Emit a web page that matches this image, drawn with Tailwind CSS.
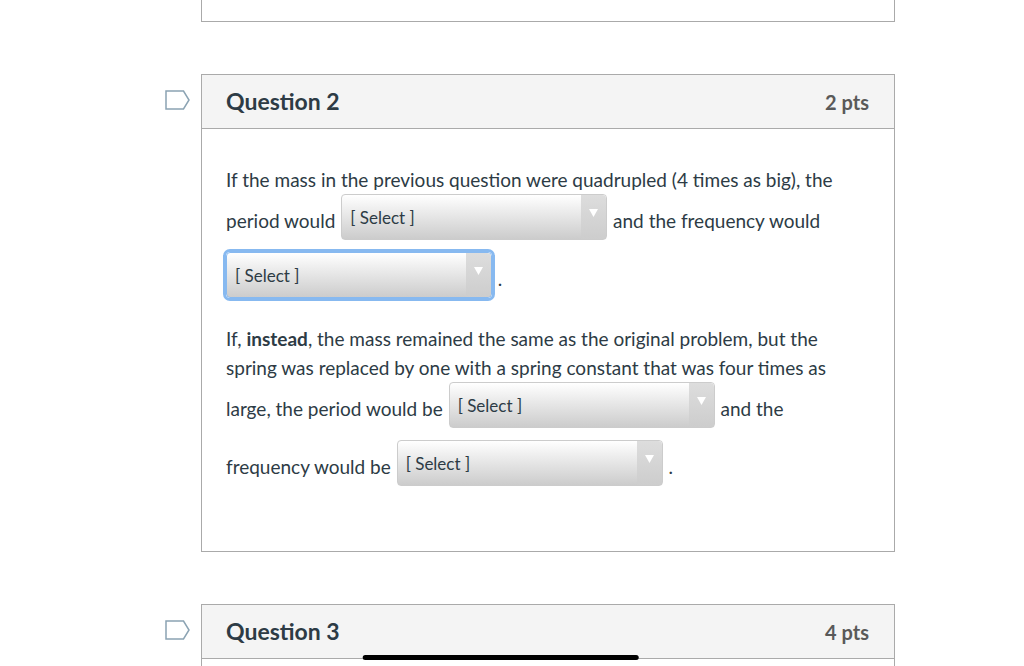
<!DOCTYPE html>
<html lang="en">
<head>
    <meta charset="UTF-8">
    <meta name="viewport" content="width=device-width, initial-scale=1.0">
    <title>Quiz</title>
    <script src="https://cdn.jsdelivr.net/npm/@tailwindcss/browser@4"></script>
</head>
<body class="h-screen overflow-hidden bg-white font-[Lato,sans-serif] text-[#2d3b45]">
    <main class="pl-[165px] pr-[129px]">
        <!-- question 1 -->
        <section class="ml-9 h-[22px] border border-t-0 border-[#aaaaaa]"></section>

        <!-- question 2 -->
        <section class="mt-[52px] flex items-start">
            <button class="mt-4 w-9" aria-label="Flag question 2">
                <svg class="h-5 w-[25px]" viewBox="0 0 25 20" fill="none" stroke="#8ba3b3" stroke-width="1.5"><path d="M1 1H18.5L24 10L18.5 19H1Z"/></svg>
            </button>
            <div class="flex-1 border border-[#aaaaaa]">
                <header class="flex h-[54px] items-center justify-between border-b border-[#aaaaaa] bg-[#f4f4f4] pr-[25px] pl-6">
                    <h2 class="text-[23px] font-bold">Question 2</h2>
                    <span class="text-xl font-bold text-[#595959]">2 pts</span>
                </header>
                <div class="space-y-[14px] pt-9 pr-10 pb-[53px] pl-6 text-[19px] leading-[29px]">
                    <p>
                        If the mass in the previous question were quadrupled (4 times as big), the
                        <label for="period1">period would</label>
                        <span class="relative mx-px mb-3 inline-block h-[46px] w-[266px] align-middle">
                            <select id="period1" class="block h-full w-full appearance-none rounded-sm border border-[#cccccc] bg-linear-to-b from-white to-[#cccccc] px-2 text-[17px]">
                                <option>[ Select ]</option>
                            </select>
                            <span class="pointer-events-none absolute inset-y-px right-px flex w-[25px] justify-center rounded-r-sm bg-linear-to-b from-[#dddddd] to-[#cdcdcd] pt-[14px]">
                                <svg class="h-2 w-[9px]" viewBox="0 0 9 8" fill="#ffffff"><path d="M0 0H9L4.5 8Z"/></svg>
                            </span>
                        </span>
                        <label for="frequency1">and the frequency would</label>
                        <!-- focused -->
                        <span class="relative mr-px mb-3 inline-block h-[46px] w-[266px] align-middle">
                            <select id="frequency1" class="block h-full w-full appearance-none rounded-sm border border-[#87b9f0] bg-linear-to-b from-white to-[#cccccc] px-2 text-[17px] ring-3 ring-[#87b9f0]">
                                <option>[ Select ]</option>
                            </select>
                            <span class="pointer-events-none absolute inset-y-px right-px flex w-[25px] justify-center rounded-r-sm bg-linear-to-b from-[#dddddd] to-[#cdcdcd] pt-[14px]">
                                <svg class="h-2 w-[9px]" viewBox="0 0 9 8" fill="#ffffff"><path d="M0 0H9L4.5 8Z"/></svg>
                            </span>
                        </span>
                        .
                    </p>
                    <p>
                        If, <strong>instead</strong>, the mass remained the same as the original problem, but the spring was replaced by one with a spring constant that was four times as large, <label for="period2">the period would be</label>
                        <span class="relative mx-px mb-3 inline-block h-[46px] w-[266px] align-middle">
                            <select id="period2" class="block h-full w-full appearance-none rounded-sm border border-[#cccccc] bg-linear-to-b from-white to-[#cccccc] px-2 text-[17px]">
                                <option>[ Select ]</option>
                            </select>
                            <span class="pointer-events-none absolute inset-y-px right-px flex w-[25px] justify-center rounded-r-sm bg-linear-to-b from-[#dddddd] to-[#cdcdcd] pt-[14px]">
                                <svg class="h-2 w-[9px]" viewBox="0 0 9 8" fill="#ffffff"><path d="M0 0H9L4.5 8Z"/></svg>
                            </span>
                        </span>
                        <label for="frequency2">and the frequency would be</label>
                        <span class="relative mx-px mb-3 inline-block h-[46px] w-[266px] align-middle">
                            <select id="frequency2" class="block h-full w-full appearance-none rounded-sm border border-[#cccccc] bg-linear-to-b from-white to-[#cccccc] px-2 text-[17px]">
                                <option>[ Select ]</option>
                            </select>
                            <span class="pointer-events-none absolute inset-y-px right-px flex w-[25px] justify-center rounded-r-sm bg-linear-to-b from-[#dddddd] to-[#cdcdcd] pt-[14px]">
                                <svg class="h-2 w-[9px]" viewBox="0 0 9 8" fill="#ffffff"><path d="M0 0H9L4.5 8Z"/></svg>
                            </span>
                        </span>
                        .
                    </p>
                </div>
            </div>
        </section>

        <!-- question 3 -->
        <section class="mt-[52px] flex items-start">
            <button class="mt-4 w-9" aria-label="Flag question 3">
                <svg class="h-5 w-[25px]" viewBox="0 0 25 20" fill="none" stroke="#8ba3b3" stroke-width="1.5"><path d="M1 1H18.5L24 10L18.5 19H1Z"/></svg>
            </button>
            <div class="flex-1 border border-b-0 border-[#aaaaaa] pb-[7px]">
                <header class="flex h-[54px] items-center justify-between border-b border-[#aaaaaa] bg-[#f4f4f4] pr-[25px] pl-6">
                    <h2 class="text-[23px] font-bold">Question 3</h2>
                    <span class="text-xl font-bold text-[#595959]">4 pts</span>
                </header>
            </div>
        </section>
    </main>

    <!-- home indicator -->
    <div class="fixed bottom-[6px] left-1/2 h-[5px] w-[27%] -translate-x-[54%] rounded-full bg-black"></div>
</body>
</html>
